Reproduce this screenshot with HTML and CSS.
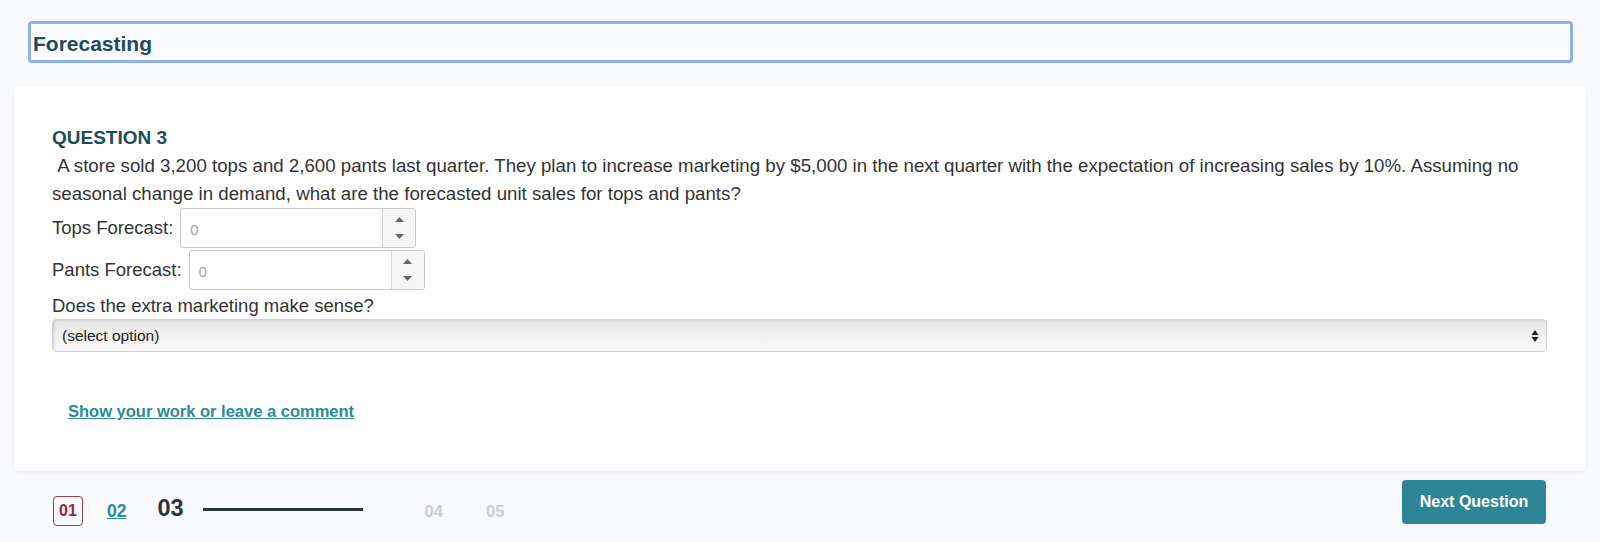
FILE: index.html
```html
<!DOCTYPE html>
<html lang="en">
<head>
<meta charset="utf-8">
<title>Forecasting</title>
<link rel="stylesheet" href="styles.css">
</head>
<body>
<div class="page">
  <div class="title-box"><span class="title-text">Forecasting</span></div>

  <div class="card">
    <div class="q-label">QUESTION 3</div>
    <p class="q-text">&nbsp;A store sold 3,200 tops and 2,600 pants last quarter. They plan to increase marketing by $5,000 in the next quarter with the expectation of increasing sales by 10%. Assuming no seasonal change in demand, what are the forecasted unit sales for tops and pants?</p>

    <div class="field-row">
      <label class="field-label">Tops Forecast:</label>
      <div class="numbox">
        <input class="num-input" type="text" placeholder="0">
        <div class="spin">
          <svg width="11" height="7" viewBox="0 0 11 7"><path d="M1 6 L5.5 1 L10 6 Z" fill="#666"/></svg>
          <svg width="11" height="7" viewBox="0 0 11 7"><path d="M1 1 L5.5 6 L10 1 Z" fill="#666"/></svg>
        </div>
      </div>
    </div>

    <div class="field-row">
      <label class="field-label">Pants Forecast:</label>
      <div class="numbox">
        <input class="num-input" type="text" placeholder="0">
        <div class="spin">
          <svg width="11" height="7" viewBox="0 0 11 7"><path d="M1 6 L5.5 1 L10 6 Z" fill="#666"/></svg>
          <svg width="11" height="7" viewBox="0 0 11 7"><path d="M1 1 L5.5 6 L10 1 Z" fill="#666"/></svg>
        </div>
      </div>
    </div>

    <div class="select-label">Does the extra marketing make sense?</div>
    <div class="select-wrap">
      <select class="select">
        <option>(select option)</option>
      </select>
      <svg class="select-arrows" width="8" height="14" viewBox="0 0 8 14"><path d="M0.5 6 L4 1 L7.5 6 Z" fill="#222"/><path d="M0.5 8 L4 13 L7.5 8 Z" fill="#222"/></svg>
    </div>

    <a class="work-link" href="#">Show your work or leave a comment</a>
  </div>

  <div class="footer">
    <nav class="steps">
      <span class="step step-wrong">01</span>
      <a class="step step-done" href="#">02</a>
      <span class="current">
        <span class="step-current">03</span>
        <span class="progress-line"></span>
      </span>
      <span class="step step-future step-04">04</span>
      <span class="step step-future">05</span>
    </nav>
    <button class="next-btn">Next Question</button>
  </div>
</div>
</body>
</html>
```

FILE: styles.css
```css
* { box-sizing: border-box; }

html, body {
  margin: 0;
  padding: 0;
  background: #f7f9fc;
  font-family: "Liberation Sans", Arial, Helvetica, sans-serif;
  color: #333;
}

.page {
  width: 1600px;
  height: 542px;
  overflow: hidden;
}

.title-box {
  margin: 21px 27px 0 28px;
  height: 42px;
  border: 3px solid #8fb0ee;
  border-radius: 4px;
  background: #fafbfe;
  padding: 4px 0 0 2px;
  display: flex;
  align-items: center;
}

.title-text {
  font-size: 21px;
  font-weight: bold;
  color: #1e4a55;
}

.card {
  margin: 23px 14px 0 14px;
  height: 385px;
  background: #fff;
  border-radius: 6px;
  box-shadow: 0 1px 4px rgba(30, 40, 60, 0.07);
  padding: 42px 39px 0 38px;
}

.q-label {
  font-size: 19px;
  line-height: 20px;
  font-weight: bold;
  color: #1e4d5a;
}

.q-text {
  margin: 4px 0 0 0;
  font-size: 18.7px;
  line-height: 28px;
  color: #333;
}

.field-row {
  display: flex;
  align-items: center;
  height: 40px;
  margin-bottom: 2px;
}

.field-label {
  font-size: 18.5px;
  color: #333;
  margin-right: 7px;
}

.numbox {
  display: flex;
  width: 236px;
  height: 40px;
  border: 1px solid #c9c9c9;
  border-radius: 3px;
  background: #fff;
  overflow: hidden;
}

.num-input {
  flex: 1;
  min-width: 0;
  border: none;
  outline: none;
  padding: 2px 0 0 9px;
  font-family: "Liberation Sans", Arial, sans-serif;
  font-size: 15px;
  color: #333;
  background: transparent;
}

.num-input::placeholder { color: #a3a3a3; }

.spin {
  width: 33px;
  border-left: 1px solid #d6d6d6;
  background: #f6f6f6;
  display: flex;
  flex-direction: column;
  align-items: center;
  justify-content: space-between;
  padding: 7px 0 7px 0;
}

.select-label {
  font-size: 18.5px;
  line-height: 27px;
  color: #333;
}

.select-wrap {
  position: relative;
  height: 33px;
}

.select {
  -webkit-appearance: none;
  appearance: none;
  width: 100%;
  height: 33px;
  border: 1px solid #d2d2d2;
  border-radius: 4px;
  background: linear-gradient(#e4e4e4 0%, #efefef 45%, #f9f9f9 100%);
  box-shadow: inset 3px 0 3px -2px rgba(0,0,0,0.12), inset 0 2px 2px -1px rgba(0,0,0,0.06);
  padding: 0 0 0 9px;
  font-family: "Liberation Sans", Arial, sans-serif;
  font-size: 15.5px;
  color: #222;
  outline: none;
}

.select-arrows {
  position: absolute;
  right: 8px;
  top: 10px;
  pointer-events: none;
}

.work-link {
  display: inline-block;
  margin: 49px 0 0 16px;
  font-size: 16.5px;
  line-height: 20px;
  font-weight: bold;
  color: #2b8a9b;
  text-decoration: underline;
}

.footer {
  display: flex;
  justify-content: space-between;
  align-items: flex-start;
  padding: 9px 54px 0 53px;
}

.steps {
  display: flex;
  align-items: center;
  height: 30px;
  margin-top: 16px;
}

.step {
  font-weight: bold;
}

.step-wrong {
  width: 30px;
  height: 30px;
  border: 1px solid #a73a4a;
  border-radius: 4px;
  color: #9c2337;
  font-size: 16px;
  display: flex;
  align-items: center;
  justify-content: center;
  margin-right: 24px;
}

.step-done {
  color: #2b8a9b;
  font-size: 17.5px;
  text-decoration: underline;
  margin-right: 31px;
}

.current {
  display: flex;
  align-items: center;
  margin-bottom: 6px;
}

.step-current {
  font-size: 23.5px;
  font-weight: bold;
  color: #2d3436;
  margin-right: 19px;
}

.progress-line {
  display: block;
  width: 160px;
  height: 3px;
  background: #2d3436;
  margin-top: 2px;
  margin-right: 62px;
}

.step-future {
  color: #c9cdd2;
  font-size: 16.5px;
}

.step-04 { margin-right: 43px; }

.next-btn {
  width: 144px;
  height: 44px;
  border: none;
  border-radius: 4px;
  background: #2f8598;
  color: #fff;
  font-family: "Liberation Sans", Arial, sans-serif;
  font-size: 16px;
  font-weight: bold;
  cursor: pointer;
}
```
